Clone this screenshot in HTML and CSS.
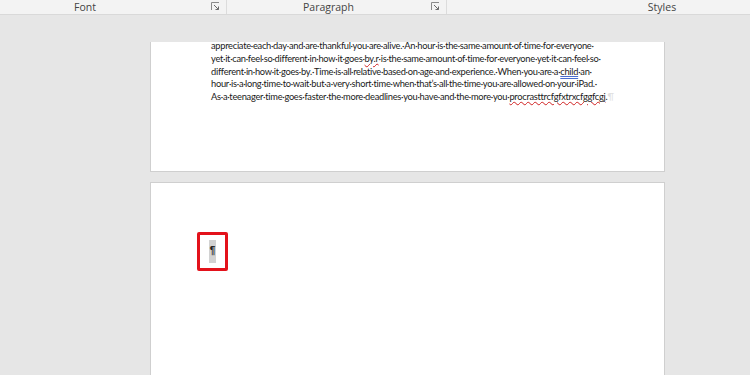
FILE: index.html
```html
<!DOCTYPE html>
<html>
<head>
<meta charset="utf-8">
<link rel="stylesheet" href="styles.css">
</head>
<body>
<div class="ribbon">
  <div class="group g-font"><span class="label">Font</span><span class="launcher"><svg width="9" height="9" viewBox="0 0 9 9"><path d="M0.5 8V0.5H8" fill="none" stroke="#8a8a8a" stroke-width="1"/><path d="M3 3L7.5 7.5M7.5 4.5V7.5H4.5" fill="none" stroke="#6a6a6a" stroke-width="1"/></svg></span></div>
  <div class="group g-para"><span class="label">Paragraph</span><span class="launcher"><svg width="9" height="9" viewBox="0 0 9 9"><path d="M0.5 8V0.5H8" fill="none" stroke="#8a8a8a" stroke-width="1"/><path d="M3 3L7.5 7.5M7.5 4.5V7.5H4.5" fill="none" stroke="#6a6a6a" stroke-width="1"/></svg></span></div>
  <div class="group g-styles"><span class="label">Styles</span></div>
</div>
<div class="doc">
  <div class="page page1">
    <div class="text">
      <p>appreciate·each·day·and·are·thankful·you·are·alive.·An·hour·is·the·same·amount·of·time·for·everyone·</p>
      <p>yet·it·can·feel·so·different·in·how·it·goes·<span class="sp">by.r</span>·is·the·same·amount·of·time·for·everyone·yet·it·can·feel·so·</p>
      <p>different·in·how·it·goes·by.·Time·is·all·relative·based·on·age·and·experience.·When·you·are·a·<span class="gr">child</span>·an·</p>
      <p>hour·is·a·long·time·to·wait·but·a·very·short·time·when·that’s·all·the·time·you·are·allowed·on·your·iPad.·</p>
      <p>As·a·teenager·time·goes·faster·the·more·deadlines·you·have·and·the·more·you·<span class="sp">procrasttrcfgfxtrxcfggfcgj</span>.<span class="pil">¶</span></p>
    </div>
  </div>
  <div class="page page2">
    <div class="mark"><span class="sel">¶</span></div>
  </div>
</div>
</body>
</html>
```
FILE: styles.css
```css
html, body {
  margin: 0;
  padding: 0;
}
body {
  width: 750px;
  height: 375px;
  overflow: hidden;
  background: #e6e6e6;
  font-family: "Open Sans", "Liberation Sans", sans-serif;
}
.ribbon {
  height: 14px;
  background: #f3f3f3;
  border-bottom: 1px solid #d9d9d9;
  display: grid;
  grid-template-columns: 227px 220px 1fr;
  font-size: 10.5px;
  color: #444;
  line-height: 14px;
}
.group {
  position: relative;
  text-align: center;
  border-right: 1px solid #dcdcdc;
}
.group.g-styles {
  border-right: none;
}
.g-font .label { padding-right: 56px; }
.g-para .label { padding-right: 16px; }
.g-styles .label { padding-left: 127px; }
.launcher {
  position: absolute;
  right: 6px;
  top: 2px;
  line-height: 0;
}
.doc {
  padding-top: 27px;
  display: flex;
  flex-direction: column;
  gap: 10px;
}
.page {
  margin-left: 150px;
  width: 513px;
  background: #fff;
  border: 1px solid #cfcfcf;
  box-sizing: content-box;
}
.page1 {
  height: 129px;
  border-top: none;
  overflow: hidden;
}
.page2 {
  height: 200px;
}
.text {
  margin-top: -2px;
  padding-left: 60px;
  font-family: Lato, "Open Sans", sans-serif;
  font-size: 9.3px;
  letter-spacing: -0.28px;
  line-height: 12.8px;
  color: #1a1a1a;
}
.text p {
  margin: 0;
  white-space: nowrap;
}
.sp {
  text-decoration: underline wavy #d02020;
  text-decoration-thickness: 1px;
  text-underline-offset: 1px;
}
.gr {
  text-decoration: underline double #4a6fd0;
  text-decoration-thickness: 1px;
  text-underline-offset: 1px;
}
.pil {
  color: #e0e0e0;
}
.mark {
  margin-left: 46px;
  margin-top: 49px;
  width: 25px;
  height: 33px;
  border: 3px solid #e3121b;
  border-radius: 2px;
  display: flex;
  align-items: center;
  justify-content: center;
}
.sel {
  display: block;
  width: 7px;
  height: 23px;
  background: #d2d2d2;
  color: #222;
  font-family: "Liberation Sans", sans-serif;
  font-size: 10px;
  line-height: 21px;
  text-align: center;
  font-weight: bold;
}
```
